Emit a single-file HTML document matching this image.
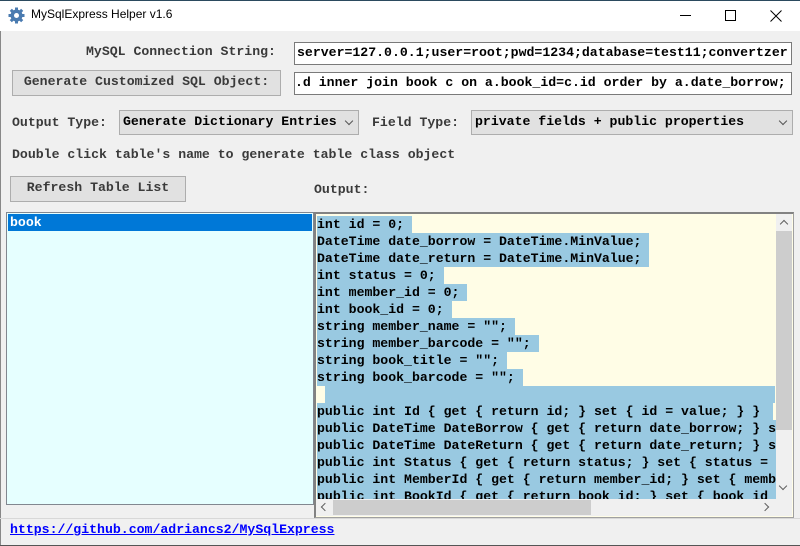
<!DOCTYPE html>
<html><head><meta charset="utf-8"><style>
*{margin:0;padding:0;box-sizing:border-box}
body{width:800px;height:546px;background:#f0f0f0;position:relative;overflow:hidden;font-family:"Liberation Mono",monospace;font-weight:bold;font-size:13.2px;color:#1e1e1e}
.a{position:absolute;white-space:pre}
.lbl{color:#3a3a3a}
.tb{position:absolute;background:#fff;border:1px solid #7a7a7a;overflow:hidden;white-space:pre;padding-left:2px;line-height:20px;color:#000}
.btn{position:absolute;background:#e1e1e1;border:1px solid #adadad;color:#3a3a3a;text-align:center;line-height:22px}
.cb{position:absolute;background:#e1e1e1;border:1px solid #adadad;color:#000;line-height:22px;padding-left:3px;white-space:pre}
.cb:after{content:"";position:absolute;right:6px;top:7px;width:5px;height:5px;border-right:1px solid #555;border-bottom:1px solid #555;transform:rotate(45deg)}
.ln{position:absolute;left:317px;height:17px;line-height:17px;background:#99c9e1;white-space:pre;color:#000}
</style></head><body>
<div class="a" style="left:0;top:0;width:800px;height:31px;background:#fff;border-top:1px solid #2b4a5e"></div>
<svg class="a" style="left:8px;top:7px" width="17" height="17" viewBox="0 0 17 17"><g fill="#4a7bb0"><circle cx="8.5" cy="8.5" r="6"/><g stroke="#4a7bb0" stroke-width="3"><line x1="8.5" y1="0.5" x2="8.5" y2="16.5"/><line x1="0.5" y1="8.5" x2="16.5" y2="8.5"/><line x1="2.8" y1="2.8" x2="14.2" y2="14.2"/><line x1="14.2" y1="2.8" x2="2.8" y2="14.2"/></g></g><circle cx="8.5" cy="8.5" r="2.5" fill="#fff"/></svg>
<div class="a" style="left:31px;top:7px;font-family:'Liberation Sans',sans-serif;font-weight:normal;font-size:12px;color:#000">MySqlExpress Helper v1.6</div>
<div class="a" style="left:680px;top:15px;width:11px;height:1px;background:#000"></div>
<div class="a" style="left:725px;top:10px;width:11px;height:11px;border:1px solid #000"></div>
<svg class="a" style="left:770px;top:10px" width="12" height="12" viewBox="0 0 12 12"><path d="M0.5 0.5L11.5 11.5M11.5 0.5L0.5 11.5" stroke="#000" stroke-width="1"/></svg>
<div class="a" style="left:0;top:31px;width:1px;height:515px;background:#888"></div>
<div class="a" style="left:0;top:545px;width:800px;height:1px;background:#555"></div>

<div class="a lbl" style="left:86px;top:44px">MySQL Connection String:</div>
<div class="tb" style="left:294px;top:42px;width:498px;height:23px">server=127.0.0.1;user=root;pwd=1234;database=test11;convertzer</div>
<div class="btn" style="left:12px;top:70px;width:269px;height:26px">Generate Customized SQL Object:</div>
<div class="tb" style="left:294px;top:72px;width:498px;height:23px;padding-left:0">.d inner join book c on a.book_id=c.id order by a.date_borrow;</div>
<div class="a lbl" style="left:12px;top:115px">Output Type:</div>
<div class="cb" style="left:119px;top:110px;width:240px;height:25px">Generate Dictionary Entries</div>
<div class="a lbl" style="left:372px;top:115px">Field Type:</div>
<div class="cb" style="left:471px;top:110px;width:322px;height:25px">private fields + public properties</div>
<div class="a lbl" style="left:12px;top:147px">Double click table's name to generate table class object</div>
<div class="btn" style="left:10px;top:176px;width:176px;height:26px">Refresh Table List</div>
<div class="a lbl" style="left:314px;top:182px">Output:</div>

<div class="a" style="left:6px;top:212px;width:308px;height:293px;background:#e6ffff;border:1px solid #828790"></div>
<div class="a" style="left:8px;top:214px;width:304px;height:17px;background:#0078d7;color:#fff;line-height:17px;padding-left:2px">book</div>

<div class="a" style="left:314px;top:212px;width:480px;height:306px;background:#fffde6;border:1px solid #a0a0a0;border-left:2px solid #828282;border-top:2px solid #828282;overflow:hidden"></div>
<div class="ln" style="top:216px">int id = 0; </div>
<div class="ln" style="top:233px">DateTime date_borrow = DateTime.MinValue; </div>
<div class="ln" style="top:250px">DateTime date_return = DateTime.MinValue; </div>
<div class="ln" style="top:267px">int status = 0; </div>
<div class="ln" style="top:284px">int member_id = 0; </div>
<div class="ln" style="top:301px">int book_id = 0; </div>
<div class="ln" style="top:318px">string member_name = ""; </div>
<div class="ln" style="top:335px">string member_barcode = ""; </div>
<div class="ln" style="top:352px">string book_title = ""; </div>
<div class="ln" style="top:369px">string book_barcode = ""; </div>
<div class="ln" style="top:386px;left:325px;width:450px"> </div>
<div class="a" style="left:317px;top:403px;width:459px;height:96px;overflow:hidden">
<div class="ln" style="left:0;top:0;width:456px">public int Id { get { return id; } set { id = value; } }</div>
<div class="ln" style="left:0;top:17px;width:459px">public DateTime DateBorrow { get { return date_borrow; } set</div>
<div class="ln" style="left:0;top:34px;width:459px">public DateTime DateReturn { get { return date_return; } set</div>
<div class="ln" style="left:0;top:51px;width:459px">public int Status { get { return status; } set { status = val</div>
<div class="ln" style="left:0;top:68px;width:459px">public int MemberId { get { return member_id; } set { member</div>
<div class="ln" style="left:0;top:85px;width:459px">public int BookId { get { return book_id; } set { book_id</div>
</div>
<div class="a" style="left:776px;top:214px;width:16px;height:285px;background:#f0f0f0"></div>
<div class="a" style="left:776px;top:231px;width:16px;height:199px;background:#cdcdcd"></div>
<div class="a" style="left:781px;top:221px;width:6px;height:6px;border-left:1.5px solid #606060;border-top:1.5px solid #606060;transform:rotate(45deg)"></div>
<div class="a" style="left:780px;top:483px;width:6px;height:6px;border-right:1.5px solid #606060;border-bottom:1.5px solid #606060;transform:rotate(45deg)"></div>
<div class="a" style="left:316px;top:499px;width:476px;height:17px;background:#f0f0f0"></div>
<div class="a" style="left:333px;top:500px;width:258px;height:15px;background:#cdcdcd"></div>
<div class="a" style="left:322px;top:504px;width:6px;height:6px;border-left:1.5px solid #606060;border-bottom:1.5px solid #606060;transform:rotate(45deg)"></div>
<div class="a" style="left:762px;top:504px;width:6px;height:6px;border-right:1.5px solid #606060;border-top:1.5px solid #606060;transform:rotate(45deg)"></div>
<div class="a" style="left:0;top:518px;width:800px;height:1px;background:#d8d8d8"></div>
<div class="a" style="left:10px;top:522px;color:#0000ff;text-decoration:underline">https://github.com/adriancs2/MySqlExpress</div>
</body></html>
